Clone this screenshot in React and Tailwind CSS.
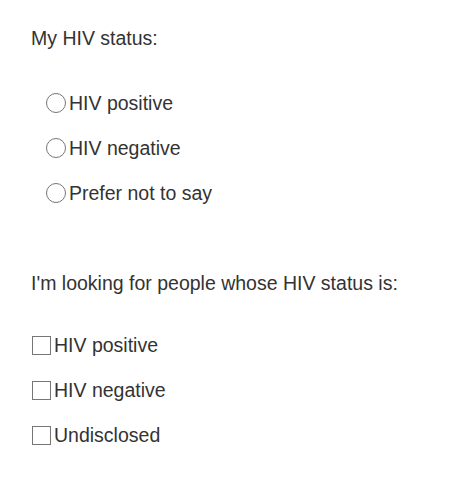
function Radio({ label }) {
  return (
    <label className="flex items-center h-[24px] ml-[15px]">
      <span className="w-[20px] h-[20px] rounded-full border border-[#767676] bg-white shrink-0"></span>
      <span className="ml-[3px]">{label}</span>
    </label>
  );
}

function Check({ label }) {
  return (
    <label className="flex items-center h-[24px] ml-[1px]">
      <span className="w-[19px] h-[19px] border border-[#767676] bg-white shrink-0"></span>
      <span className="ml-[3px]">{label}</span>
    </label>
  );
}

export default function App() {
  return (
    <div
      className="min-h-screen bg-white text-[#333333] text-[19.5px] leading-[24px] pl-[31px] pt-[26px]"
      style={{ fontFamily: '"Liberation Sans", Arial, sans-serif' }}
    >
      <p>My HIV status:</p>
      <div className="mt-[41px] flex flex-col gap-[21px]">
        <Radio label="HIV positive" />
        <Radio label="HIV negative" />
        <Radio label="Prefer not to say" />
      </div>
      <p className="mt-[66px]">I'm looking for people whose HIV status is:</p>
      <div className="mt-[38px] flex flex-col gap-[21px]">
        <Check label="HIV positive" />
        <Check label="HIV negative" />
        <Check label="Undisclosed" />
      </div>
    </div>
  );
}
